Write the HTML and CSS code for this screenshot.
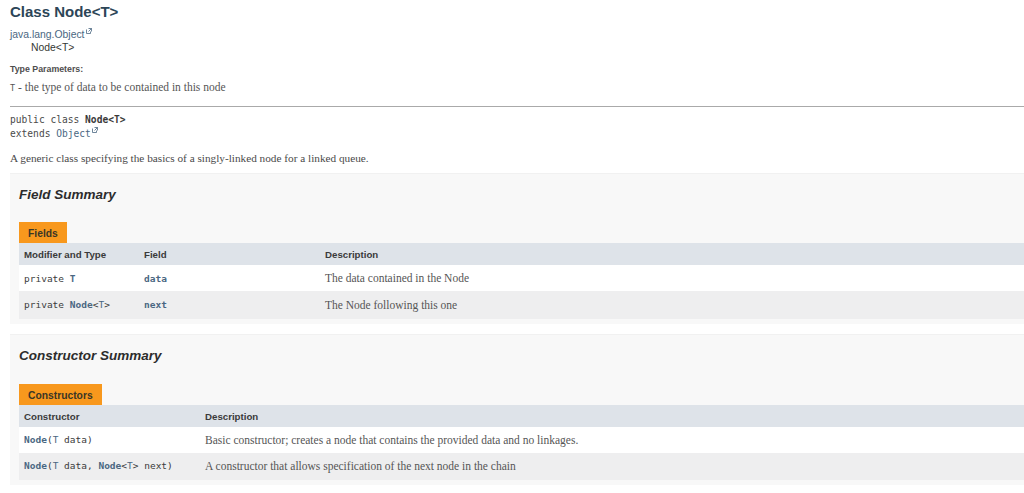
FILE: index.html
```html
<!DOCTYPE html>
<html lang="en">
<head>
<meta charset="utf-8">
<title>Node</title>
<link rel="stylesheet" href="styles.css">
</head>
<body>
<main class="page">
  <h1 class="title">Class Node&lt;T&gt;</h1>
  <div class="inherit">
    <a class="link" href="#">java.lang.Object<svg class="ext" viewBox="0 0 6 6"><path d="M.5 1.5v4h4V3.5M2.5.5h3v3M5.5.5L2.5 3.5" fill="none" stroke="currentColor" stroke-width=".8"/></svg></a>
    <div class="inherit-child">Node&lt;T&gt;</div>
  </div>
  <div class="type-label">Type Parameters:</div>
  <div class="type-desc"><code class="mono">T</code> - the type of data to be contained in this node</div>
  <hr class="rule">
  <div class="signature">
    <div>public class <b class="sig-name">Node&lt;T&gt;</b></div>
    <div>extends <a class="link" href="#">Object<svg class="ext" viewBox="0 0 6 6"><path d="M.5 1.5v4h4V3.5M2.5.5h3v3M5.5.5L2.5 3.5" fill="none" stroke="currentColor" stroke-width=".8"/></svg></a></div>
  </div>
  <p class="lead">A generic class specifying the basics of a singly-linked node for a linked queue.</p>

  <section class="summary">
    <h2 class="summary-title">Field Summary</h2>
    <div class="tab">Fields</div>
    <div class="table fields">
      <div class="cell head">Modifier and Type</div><div class="cell head">Field</div><div class="cell head">Description</div>
      <div class="cell mono odd">private <a class="link strong" href="#">T</a></div><div class="cell mono odd"><a class="link strong" href="#">data</a></div><div class="cell serif odd">The data contained in the Node</div>
      <div class="cell mono even">private <a class="link strong" href="#">Node</a>&lt;<a class="link" href="#">T</a>&gt;</div><div class="cell mono even"><a class="link strong" href="#">next</a></div><div class="cell serif even">The Node following this one</div>
    </div>
  </section>

  <section class="summary">
    <h2 class="summary-title">Constructor Summary</h2>
    <div class="tab">Constructors</div>
    <div class="table ctors">
      <div class="cell head">Constructor</div><div class="cell head">Description</div>
      <div class="cell mono odd"><a class="link strong" href="#">Node</a>(<a class="link" href="#">T</a> data)</div><div class="cell serif odd">Basic constructor; creates a node that contains the provided data and no linkages.</div>
      <div class="cell mono even"><a class="link strong" href="#">Node</a>(<a class="link" href="#">T</a> data, <a class="link strong" href="#">Node</a>&lt;<a class="link" href="#">T</a>&gt; next)</div><div class="cell serif even">A constructor that allows specification of the next node in the chain</div>
    </div>
  </section>
</main>
</body>
</html>
```
FILE: styles.css
```css
html, body { margin: 0; padding: 0; background: #fff; }
body { color: #353833; font-family: "Liberation Sans", Arial, sans-serif; font-size: 10px; overflow: hidden; height: 493px; }
.page { padding: 0 0 0 10px; width: 1030px; box-sizing: border-box; }
.title { margin: 0; padding-top: 4px; font-size: 15px; line-height: 16px; font-weight: 700; color: #2c4557; }
.inherit { margin-top: 8px; font-size: 10.4px; line-height: 13px; }
.inherit-child { padding-left: 21px; }
.link { color: #4a6782; text-decoration: none; }
.strong { font-weight: 700; }
.ext { width: 6px; height: 6px; vertical-align: 4px; margin-left: 1px; }
.type-label { margin-top: 10px; font-size: 8.8px; line-height: 11px; font-weight: 700; color: #4e4e4e; }
.type-desc { margin-top: 6px; font-family: "Liberation Serif", serif; font-size: 11.5px; line-height: 13px; color: #555; }
.mono { font-family: "DejaVu Sans Mono", monospace; font-size: 8.5px; }
.rule { margin: 11px 0 0; border: 0; border-top: 1px solid #aaa; }
.signature { margin-top: 6px; font-family: "DejaVu Sans Mono", monospace; font-size: 9.6px; line-height: 14px; color: #4a4a4a; }
.sig-name { font-weight: 700; color: #3a3a3a; }
.lead { margin: 10px 0 0; font-family: "Liberation Serif", serif; font-size: 11.25px; line-height: 14px; color: #4a4a4a; }
.summary { margin-top: 8px; padding: 0 0 4px 9px; height: 146px; background: #f8f8f8; border-top: 1px solid #f1f1f1; }
.summary + .summary { margin-top: 10px; }
.summary-title { margin: 0; padding-top: 13px; height: 35px; font-size: 13.5px; line-height: 16px; font-style: italic; font-weight: 700; color: #2c2c2c; }
.summary + .summary .summary-title { height: 36px; }
.tab { display: inline-block; padding: 0 9px; height: 21px; line-height: 23px; background: #f8981d; color: #3a3626; font-size: 10.3px; font-weight: 700; vertical-align: top; }
.table { display: grid; }
.fields { grid-template-columns: 120px 181px 1fr; grid-template-rows: 22px 26px 28px; }
.ctors { grid-template-columns: 181px 1fr; grid-template-rows: 22px 26px 27px; }
.cell { padding: 0 5px; display: flex; align-items: center; white-space: pre; }
.head { background: #dee3e9; padding-top: 1px; font-size: 9.7px; font-weight: 700; color: #3a3a3a; }
.odd { background: #fff; }
.even { background: #eeeeef; }
.cell.mono { font-size: 9.5px; display: block; line-height: 27px; color: #3b3b3b; }
.ctors .cell.mono { line-height: 25px; }
.ctors .serif { padding-bottom: 1px; }
.serif { font-family: "Liberation Serif", serif; font-size: 11.5px; color: #555; }
```
